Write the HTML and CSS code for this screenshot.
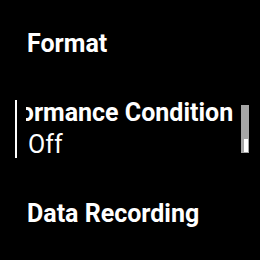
FILE: index.html
```html
<!DOCTYPE html>
<html>
<head>
<meta charset="utf-8">
<link rel="stylesheet" href="styles.css">
</head>
<body>
<div class="screen">
  <div class="list">
    <div class="row"><div class="title">Format</div></div>
    <div class="row selected">
      <div class="bar"></div>
      <div class="clip">
        <div class="title scrolled">Performance Condition</div>
        <div class="sub">Off</div>
      </div>
    </div>
    <div class="row"><div class="title">Data Recording</div></div>
  </div>
  <div class="scrollbar"><div class="thumb"></div></div>
</div>
</body>
</html>
```
FILE: styles.css
```css
html, body {
  margin: 0;
  padding: 0;
  background: #000;
}
.screen {
  position: relative;
  width: 260px;
  height: 260px;
  overflow: hidden;
  background: #000;
  font-family: Roboto, "Liberation Sans", sans-serif;
  color: #fff;
}
.list {
  display: flex;
  flex-direction: column;
  gap: 41px;
  padding: 30px 0 0 27px;
}
.row {
  display: flex;
}
.title {
  font-size: 25px;
  font-weight: 700;
  line-height: 28px;
  white-space: nowrap;
}
.selected {
  margin-left: -12px;
}
.bar {
  width: 2px;
  height: 58px;
  margin-top: 1px;
  background: #fff;
}
.clip {
  margin-left: 9px;
  width: 210px;
  overflow: hidden;
  display: flex;
  flex-direction: column;
  gap: 4px;
}
.scrolled {
  margin-left: -54px;
}
.sub {
  font-size: 25px;
  font-weight: 400;
  line-height: 28px;
  padding-left: 2px;
}
.scrollbar {
  position: absolute;
  left: 241px;
  top: 105px;
  width: 8px;
  height: 48px;
  background: #a6a6a6;
  box-sizing: border-box;
  padding: 0 1px 1px 3px;
  display: flex;
  flex-direction: column;
  justify-content: flex-end;
}
.thumb {
  height: 13px;
  background: #fff;
}
```
